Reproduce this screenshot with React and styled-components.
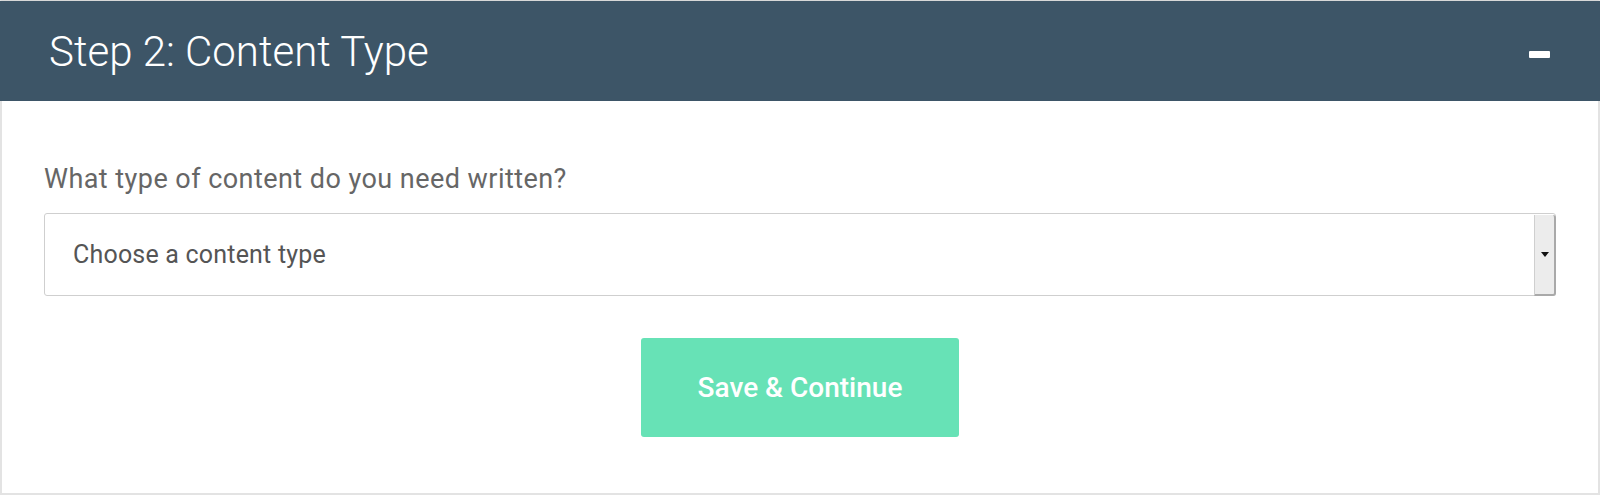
import React from 'react'
import styled, { createGlobalStyle } from 'styled-components'

const GlobalStyle = createGlobalStyle`
  * {
    box-sizing: border-box;
  }

  body {
    margin: 0;
    background: #fff;
    font-family: Roboto, 'Liberation Sans', sans-serif;
  }
`

const Panel = styled.section`
  width: 1600px;
  height: 495px;
  border: 2px solid #e3e3e3;
  border-top: 1px solid #d8d8d8;
  background: #fff;
  display: flex;
  flex-direction: column;
`

const PanelHeader = styled.header`
  height: 100px;
  margin: 0 -2px;
  background: #3d5567;
  display: flex;
  align-items: center;
  justify-content: space-between;
  padding: 0 50px 0 49px;

  h2 {
    margin: 0;
    font-family: Roboto, sans-serif;
    font-weight: 300;
    font-size: 42px;
    color: #fff;
  }
`

const Collapse = styled.button`
  width: 21px;
  height: 7px;
  border: none;
  border-radius: 1px;
  background: #fff;
  padding: 0;
  margin-top: 6px;
  cursor: pointer;
`

const PanelBody = styled.div`
  flex: 1;
  display: flex;
  flex-direction: column;
  padding: 63px 42px 0;
`

const Label = styled.label`
  font-size: 27px;
  line-height: 30px;
  letter-spacing: 0.45px;
  color: #666;
  margin-bottom: 19px;
`

const Select = styled.div`
  height: 83px;
  display: flex;
  align-items: stretch;
  border: 1px solid #cfcfcf;
  border-radius: 3px;
  background: #fff;

  span {
    flex: 1;
    display: flex;
    align-items: center;
    padding-left: 28px;
    font-size: 25px;
    letter-spacing: 0.2px;
    color: #555;
  }
`

const Caret = styled.div`
  width: 22px;
  margin: 1px -1px -1px 0;
  background: #ececec;
  border-left: 1px solid #cfcfcf;
  border-right: 2px solid #a9a9a9;
  border-bottom: 2px solid #a9a9a9;
  border-radius: 0 3px 3px 0;
  display: flex;
  align-items: center;
  justify-content: center;

  &::after {
    content: '';
    border-left: 4.5px solid transparent;
    border-right: 4.5px solid transparent;
    border-top: 5px solid #111;
  }
`

const Actions = styled.div`
  display: flex;
  justify-content: center;
  padding-top: 42px;
`

const SaveButton = styled.button`
  width: 318px;
  height: 99px;
  border: none;
  border-radius: 3px;
  background: #67e2b6;
  color: #fff;
  font-family: Roboto, sans-serif;
  font-weight: 500;
  font-size: 28px;
  cursor: pointer;
`

const App = () => {
  return (
    <>
      <GlobalStyle />
      <Panel>
        <PanelHeader>
          <h2>Step 2: Content Type</h2>
          <Collapse aria-label='Collapse' />
        </PanelHeader>
        <PanelBody>
          <Label>What type of content do you need written?</Label>
          <Select>
            <span>Choose a content type</span>
            <Caret />
          </Select>
          <Actions>
            <SaveButton>Save &amp; Continue</SaveButton>
          </Actions>
        </PanelBody>
      </Panel>
    </>
  )
}

export default App
